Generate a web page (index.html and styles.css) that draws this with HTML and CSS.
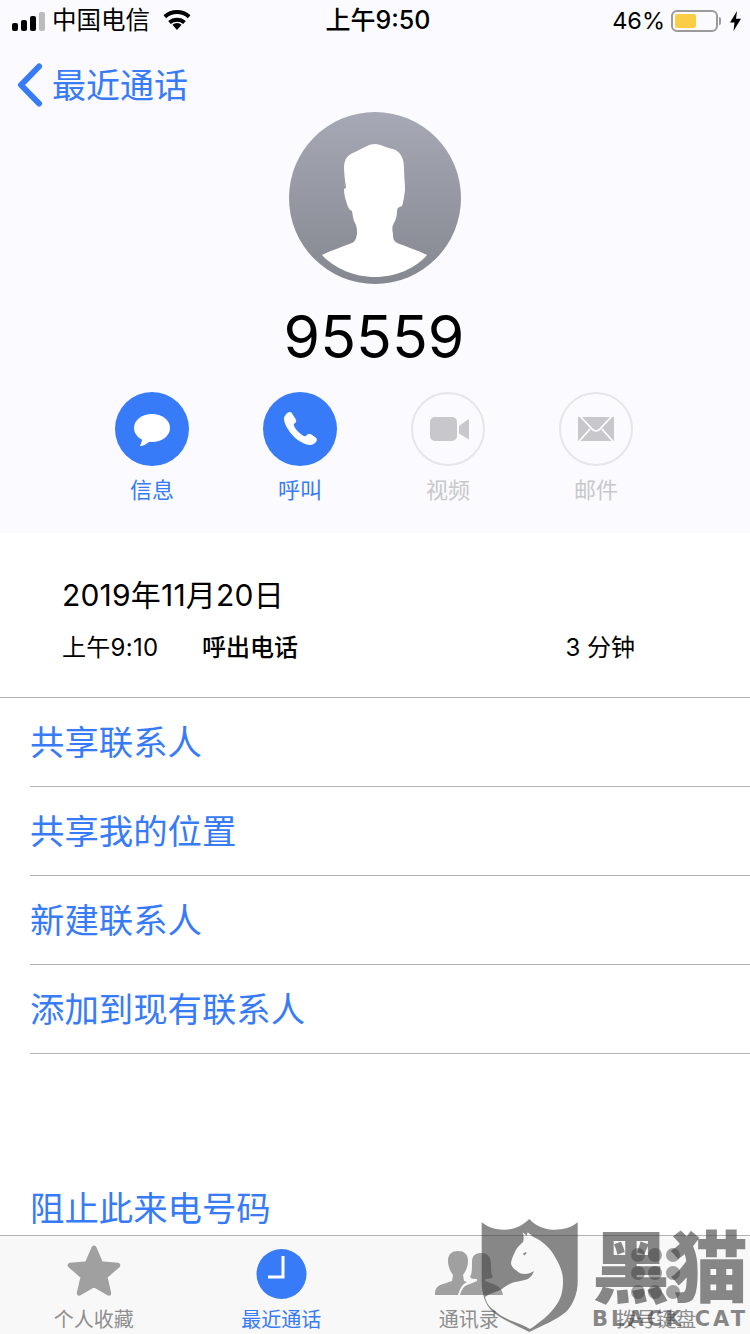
FILE: index.html
```html
<!DOCTYPE html>
<html>
<head>
    <title>95559</title>
    <link rel="stylesheet" href="styles.css">
</head>
<body>
    <div class="header">
        <div class="status-bar">
            <div class="status-left">
                <div class="signal"><i></i><i></i><i></i><i class="off"></i></div>
                <span class="carrier">中国电信</span>
                <svg class="wifi" width="28" height="20" viewBox="0 0 28 20">
                    <path d="M14 20l-4.600-5.200a7 7 0 0 1 9.200 0z" />
                    <path d="M14 7.800c3.400 0 6.500 1.200 8.800 3.300l-2.600 2.900a9.500 9.500 0 0 0-12.400 0l-2.600-2.900c2.300-2.100 5.400-3.300 8.800-3.300z" />
                    <path d="M14 0c5.100 0 9.900 1.900 13.500 5.200l-2.700 3a16.200 16.200 0 0 0-21.600 0l-2.700-3c3.600-3.300 8.400-5.200 13.500-5.200z" />
                </svg>
            </div>
            <div class="status-time">上午9:50</div>
            <div class="status-right">
                <span class="percent">46%</span>
                <div class="battery"><div class="battery-fill"></div></div>
                <div class="battery-nub"></div>
                <svg class="bolt" width="11" height="20" viewBox="0 0 11 20">
                    <path d="M7 0L0 11.500h4.500L3.500 20 11 7.800H6z" />
                </svg>
            </div>
        </div>

        <div class="nav-bar">
            <svg class="back" width="26" height="44" viewBox="0 0 26 44">
                <path d="M22 3.500L4 22l18 18.500" />
            </svg>
            <span class="nav-title">最近通话</span>
        </div>

        <svg class="avatar" width="172" height="172" viewBox="0 0 172 172">
            <defs>
                <linearGradient id="avatar-bg" x1="0" y1="0" x2="0" y2="1">
                    <stop offset="0" stop-color="#a6a9b5" />
                    <stop offset="1" stop-color="#858890" />
                </linearGradient>
            </defs>
            <circle cx="86" cy="86" r="86" fill="url(#avatar-bg)" />
            <path fill="#fff" d="M86 32C92 32 97 36 104 37C111 39 115 46 115 56C115 64 116 71 116 78C115 86 114 91 113 94C110 95 108 96 108 99C108 104 107 107 105 111C103 114 103 118 104 122C104 127 105 129 108 131C118 135 128 138 138 143C127 156 107 165 86 165C65 165 45 156 33 143C43 138 53 135 63 131C67 129 67 126 68 122C68 118 68 115 66 111C64 108 64 104 63 99C60 98 59 95 58 92C56 86 55 82 55 77L57 76C56 68 55 61 55 54C56 47 58 43 66 40C73 37 79 32 86 32Z" />
        </svg>

        <div class="number">95559</div>

        <div class="actions">
            <div class="action">
                <svg class="action-icon" width="74" height="74" viewBox="0 0 74 74">
                    <circle cx="37" cy="37" r="37" fill="#377bf8" />
                    <ellipse cx="37" cy="36" rx="18" ry="14" fill="#fff" />
                    <path fill="#fff" d="M27 45L30 49C29 51 28 53 25 54C27 52 27 49 27 45Z" />
                    <path fill="#fff" d="M25 54C28 54 32 52 35 49L28 47Z" />
                </svg>
                <div class="action-label">信息</div>
            </div>
            <div class="action">
                <svg class="action-icon" width="74" height="74" viewBox="0 0 74 74">
                    <circle cx="37" cy="37" r="37" fill="#377bf8" />
                    <path fill="#fff" d="M25 20.500C26.500 19.500 28 19.800 29 21.300L32.800 27.500C33.500 28.800 33.300 30 32.300 30.800L30.800 32.300C30.600 34 33 38 36 40.500C38.500 43 41 44.500 42.500 44.300L44.500 42.500C45.500 41.500 46.800 41.500 48 42.200L52.700 45.500C54 46.500 54.200 48 53.300 49.500C51.500 52 49 53.300 46.500 53C40 52 33 47.500 28.500 42C24 36.500 20.800 30.500 21 26.500C21.200 24 22.800 22 25 20.500Z" />
                </svg>
                <div class="action-label">呼叫</div>
            </div>
            <div class="action off">
                <svg class="action-icon" width="74" height="74" viewBox="0 0 74 74">
                    <circle cx="37" cy="37" r="36" fill="none" stroke="#e5e5ea" stroke-width="2" />
                    <rect x="19" y="25" width="27" height="24" rx="5" fill="#c8c7cc" />
                    <path fill="#c8c7cc" d="M48 34L57 27.500C57.500 27 58 27.300 58 28V46.500C58 47.200 57.500 47.500 57 47L48 41.500Z" />
                </svg>
                <div class="action-label">视频</div>
            </div>
            <div class="action off">
                <svg class="action-icon" width="74" height="74" viewBox="0 0 74 74">
                    <circle cx="37" cy="37" r="36" fill="none" stroke="#e5e5ea" stroke-width="2" />
                    <rect x="19" y="25" width="36" height="24" fill="#c8c7cc" />
                    <path fill="none" stroke="#fff" stroke-width="1.800" d="M21 24L33 37C35 39.500 39 39.500 41 37L53 24M19.500 50L31 37M54.500 50L43 37" />
                </svg>
                <div class="action-label">邮件</div>
            </div>
        </div>
    </div>

    <div class="history">
        <div class="history-date">2019年11月20日</div>
        <div class="history-row">
            <span class="history-time">上午9:10</span>
            <span class="history-type">呼出电话</span>
            <span class="history-length">3 分钟</span>
        </div>
    </div>

    <div class="links">
        <div class="link-row">共享联系人</div>
        <div class="link-row">共享我的位置</div>
        <div class="link-row">新建联系人</div>
        <div class="link-row">添加到现有联系人</div>
    </div>

    <div class="block-row">阻止此来电号码</div>

    <div class="tab-bar">
        <div class="tab">
            <svg class="tab-icon" width="70" height="56" viewBox="0 0 70 56">
                <path fill="#a0a0a0" stroke="#a0a0a0" stroke-width="5" stroke-linejoin="round" d="M35 4L41.800 19.700 58.800 21.300 45.900 32.600 49.700 49.200 35 40.500 20.300 49.200 24.100 32.600 11.200 21.300 28.200 19.700Z" />
            </svg>
            <div class="tab-label">个人收藏</div>
        </div>
        <div class="tab active">
            <svg class="tab-icon" width="70" height="56" viewBox="0 0 70 56">
                <circle cx="35.500" cy="30" r="25" fill="#377bf8" />
                <path fill="none" stroke="#fff" stroke-width="3" d="M37 12V33H22" />
            </svg>
            <div class="tab-label">最近通话</div>
        </div>
        <div class="tab">
            <svg class="tab-icon" width="70" height="56" viewBox="0 0 70 56">
                <path fill="#a0a0a0" d="M1 51C1 44 3 42 9 40L18 37L19 31C15 26 14 20 14 17C14 10 18 7 24 7C30 7 34 10 34 17C34 22 32 27 29 31L30 37L33 38C28 40 26 45 24 51Z" />
                <path fill="#a0a0a0" d="M26 51C28 44 31 41 36 40L43 37L43 35C40 35 37 35 36 33C38 30 38 25 38 18C38 11 42 9 47 9C53 9 56 12 57 18C57 25 57 30 59 33C57 35 54 35 51 35L51 37L59 40C65 42 68 45 69 51Z" />
            </svg>
            <div class="tab-label">通讯录</div>
        </div>
        <div class="tab">
            <svg class="tab-icon" width="70" height="56" viewBox="0 0 70 56" fill="#a0a0a0">
                <circle cx="17" cy="11" r="7" /><circle cx="34" cy="11" r="7" /><circle cx="52" cy="11" r="7" />
                <circle cx="17" cy="29" r="7" /><circle cx="34" cy="29" r="7" /><circle cx="52" cy="29" r="7" />
                <circle cx="17" cy="48" r="7" /><circle cx="34" cy="48" r="7" /><circle cx="52" cy="48" r="7" />
            </svg>
            <div class="tab-label">拨号键盘</div>
        </div>
    </div>

    <!-- 角落浮水印 -->
    <svg class="mark-shield" width="110" height="120" viewBox="0 0 110 120">
        <path fill="#3c3c3c" fill-opacity=".6" fill-rule="evenodd" d="M6.700 8.300C14 14 22 16 30 15.700C40 15.500 48 11 54.300 5C60 11 68 15.500 78 15.700C87 16 96 14 102.700 8.300V67C102.700 80 98 90 92 97C82 106 66 112 54.300 118C43 112 27 106 17 97C10 90 6.700 80 6.700 67ZM47.700 18.300L51.700 21.700L52.700 18.300L58 22.700C68 27 76 35 80 43C85 51 88 59 88 67C88 77 86 84 82 90C75 101 64 109 55 115C48 111 42 109 37 107C30 104 24 101 20 97C16 94 12 91 10 83C15 79 22 78 27 75C32 71 36 69 40 68C46 67 50 66 53 65C56 63 58 60 59 57C56 59 53 60 50 60C46 60 44 59 42 57C39 55 37 53 36 50C36 46 38 42 40 38C42 33 45 31 48 28C49 25 49 22 47.700 18.300ZM48 39.500L51 38 51.500 39.500 49 41.500Z" />
    </svg>
    <div class="mark-text">
        <div class="mark-cn">黑猫</div>
        <div class="mark-en">BLACK CAT</div>
    </div>
</body>
</html>
```

FILE: styles.css
```css
body {
    font-family: Inter, "Noto Sans CJK SC", sans-serif;
    margin: 0;
    padding: 0;
    width: 750px;
    height: 1334px;
    display: flex;
    flex-direction: column;
    position: relative;
    overflow: hidden;
    background-color: #fff;
    color: #000;
}
.header {
    height: 533px;
    background-color: #fafaff;
    display: flex;
    flex-direction: column;
    align-items: center;
    flex-shrink: 0;
}
.status-bar {
    width: 100%;
    height: 40px;
    display: flex;
    align-items: center;
    justify-content: space-between;
    box-sizing: border-box;
    padding: 0 9px 0 12px;
    font-size: 24px;
    position: relative;
}
.status-left {
    display: flex;
    align-items: center;
}
.signal {
    display: flex;
    align-items: flex-end;
    gap: 3px;
    height: 20px;
    margin: 2px 6px 0 0;
}
.signal i {
    width: 6px;
    background-color: #000;
    border-radius: 2px;
    height: 8px;
}
.signal i:nth-child(2) {
    height: 11px;
}
.signal i:nth-child(3) {
    height: 15px;
}
.signal i:nth-child(4) {
    height: 19px;
}
.signal i.off {
    background-color: #bbb;
}
.carrier {
    margin-left: 1px;
    font-size: 24.500px;
    line-height: 36px;
}
.wifi {
    margin-left: 13px;
}
.status-time {
    position: absolute;
    left: 0;
    right: 0;
    top: 0;
    text-align: center;
    font-size: 25px;
    line-height: 40px;
    font-weight: 500;
    padding-left: 6px;
}
.status-right {
    display: flex;
    align-items: center;
    padding-top: 2px;
}
.percent {
    font-size: 23.500px;
    line-height: 36px;
}
.battery {
    width: 47px;
    height: 22px;
    box-sizing: border-box;
    border: 2px solid #9b9b9b;
    border-radius: 6px;
    padding: 2px;
    margin-left: 6px;
}
.battery-fill {
    width: 21px;
    height: 100%;
    background-color: #f9ce46;
    border-radius: 2px;
}
.battery-nub {
    width: 2px;
    height: 8px;
    margin-left: 1px;
    background-color: #9b9b9b;
    border-radius: 0 2px 2px 0;
}
.bolt {
    margin-left: 9px;
}
.nav-bar {
    width: 100%;
    height: 54px;
    margin-top: 18px;
    box-sizing: border-box;
    padding-left: 17px;
    display: flex;
    align-items: center;
    color: #377bf8;
    font-size: 34px;
}
.back {
    margin-right: 9px;
}
.back path {
    fill: none;
    stroke: #377bf8;
    stroke-width: 6;
    stroke-linecap: round;
    stroke-linejoin: round;
}
.nav-title {
    margin-bottom: 4px;
}
.avatar {
    display: block;
}
.number {
    margin: 16px 2px 0 0;
    font-size: 59px;
    line-height: 74px;
}
.actions {
    margin: 18px 2px 0 0;
    display: flex;
    gap: 74px;
}
.action {
    width: 74px;
    display: flex;
    flex-direction: column;
    align-items: center;
    color: #377bf8;
}
.action.off {
    color: #c8c7cc;
}
.action-icon {
    display: block;
}
.action-label {
    margin-top: 9px;
    font-size: 22px;
    line-height: 30px;
}
.history {
    flex-shrink: 0;
    padding: 43px 0 33px 62px;
    border-bottom: 1px solid #b2b2b2;
}
.history-date {
    font-size: 30px;
    line-height: 38px;
    letter-spacing: .2px;
}
.history-row {
    margin-top: 18px;
    display: flex;
    font-size: 24px;
    line-height: 32px;
}
.history-time {
    width: 140px;
    letter-spacing: .3px;
}
.history-type {
    font-weight: 500;
}
.history-length {
    margin-left: auto;
    padding-right: 115px;
}
.links {
    margin-left: 30px;
    flex-shrink: 0;
}
.link-row {
    height: 88px;
    line-height: 89px;
    font-size: 34.400px;
    color: #377bf8;
    border-bottom: 1px solid #b2b2b2;
}
.block-row {
    margin: 133px 0 0 30px;
    line-height: 44px;
    font-size: 34.400px;
    color: #377bf8;
}
.tab-bar {
    margin-top: auto;
    height: 99px;
    box-sizing: border-box;
    padding-top: 8px;
    display: flex;
    background-color: #f8f8f9;
    border-top: 1px solid #b2b2b2;
}
.tab {
    flex: 1;
    display: flex;
    flex-direction: column;
    align-items: center;
    color: #8e8e8e;
}
.tab.active {
    color: #377bf8;
}
.tab-icon {
    display: block;
}
.tab-label {
    margin-top: 6px;
    font-size: 20px;
    line-height: 28px;
}
.mark-shield {
    position: absolute;
    left: 475px;
    top: 1214px;
}
.mark-text {
    position: absolute;
    left: 592px;
    top: 1224px;
    width: 158px;
    color: #3c3c3c;
    opacity: .6;
}
.mark-cn {
    font-family: "Noto Sans CJK SC", sans-serif;
    font-size: 78px;
    font-weight: 900;
    line-height: 78px;
    white-space: nowrap;
}
.mark-en {
    font-family: "DejaVu Sans", sans-serif;
    font-size: 21px;
    font-weight: 700;
    line-height: 26px;
    letter-spacing: 3px;
    margin-top: 4px;
    white-space: nowrap;
}
```
